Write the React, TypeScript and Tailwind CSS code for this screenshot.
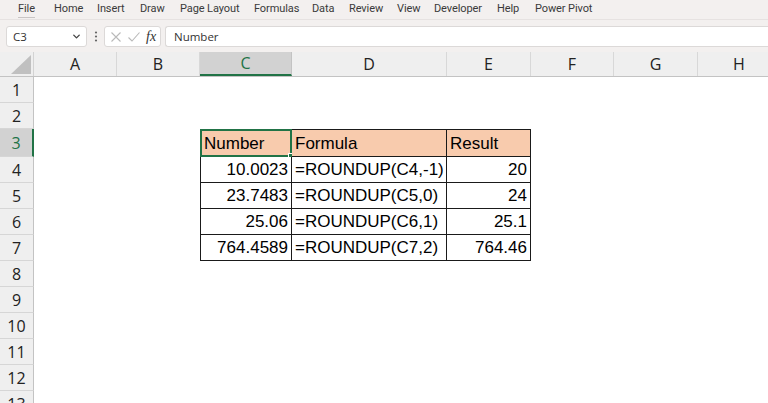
import { ChevronDown } from 'lucide-react'

const tabs = [
  { label: 'File', w: 'w-[36px]' },
  { label: 'Home', w: 'w-[43px]' },
  { label: 'Insert', w: 'w-[43px]' },
  { label: 'Draw', w: 'w-[40px]' },
  { label: 'Page Layout', w: 'w-[74px]' },
  { label: 'Formulas', w: 'w-[58px]' },
  { label: 'Data', w: 'w-[37px]' },
  { label: 'Review', w: 'w-[48px]' },
  { label: 'View', w: 'w-[37px]' },
  { label: 'Developer', w: 'w-[63px]' },
  { label: 'Help', w: 'w-[38px]' },
  { label: 'Power Pivot', w: 'w-[80px]' },
]

const cols = [
  { id: 'A', w: 'w-[83px]' },
  { id: 'B', w: 'w-[83px]' },
  { id: 'C', w: 'w-[92px]' },
  { id: 'D', w: 'w-[155px]' },
  { id: 'E', w: 'w-[84px]' },
  { id: 'F', w: 'w-[83px]' },
  { id: 'G', w: 'w-[84px]' },
  { id: 'H', w: 'w-[83px]' },
]

const rows = Array.from({ length: 13 }, (_, i) => i + 1)

const data: Record<number, [string, string, string]> = {
  3: ['Number', 'Formula', 'Result'],
  4: ['10.0023', '=ROUNDUP(C4,-1)', '20'],
  5: ['23.7483', '=ROUNDUP(C5,0)', '24'],
  6: ['25.06', '=ROUNDUP(C6,1)', '25.1'],
  7: ['764.4589', '=ROUNDUP(C7,2)', '764.46'],
}

const uiFont = { fontFamily: '"Open Sans", "Noto Sans", sans-serif' }
const tabFont = { fontFamily: 'Roboto, "Open Sans", sans-serif' }
const cellFont = { fontFamily: '"Liberation Sans", Arial, sans-serif' }

function TableCell({ row, col }: { row: number; col: string }) {
  const values = data[row]
  const idx = col === 'C' ? 0 : col === 'D' ? 1 : 2
  const header = row === 3
  const alignRight = !header && idx !== 1
  return (
    <div
      className={`relative flex h-full w-full items-end border-r border-b border-[#1a1a1a] pb-[2px] text-[17px] leading-[20px] text-black ${
        col === 'C' ? 'border-l' : ''
      } ${header ? 'border-t bg-[#f8cbad]' : 'bg-white'} ${
        alignRight ? 'justify-end pr-[3px]' : 'pl-[3px]'
      }`}
      style={cellFont}
    >
      {values[idx]}
      {header && col === 'C' && (
        <div className="pointer-events-none absolute -top-px -bottom-px -left-px -right-px border-2 border-[#217346]">
          <div className="absolute -right-[4px] -bottom-[4px] h-[6px] w-[6px] border border-white bg-[#217346]" />
        </div>
      )}
    </div>
  )
}

export default function App() {
  return (
    <div className="h-[403px] w-[768px] overflow-hidden bg-white" style={uiFont}>
      {/* ribbon tabs + formula bar */}
      <div className="bg-[#f3f0ef]">
        <div
          className="flex h-[19px] items-start pl-[18px] pt-[1px] text-[11px] leading-[15px] tracking-[-0.1px] text-[#3a3a3a]"
          style={tabFont}
        >
          {tabs.map((t) => (
            <div key={t.label} className={`${t.w} shrink-0`}>
              <span className={t.label === 'File' ? 'inline-block border-b border-[#c9c5c4] pb-[1px]' : ''}>
                {t.label}
              </span>
            </div>
          ))}
        </div>
        <div className="flex h-[33px] items-start border-t border-[#e6e2e1] pt-[6px]">
          <div className="ml-[6px] flex h-[21px] w-[81px] items-center justify-between rounded-[3px] border border-[#dcd9d8] bg-white pl-[6px] pr-[4px] text-[11.5px] text-[#333]">
            <span>C3</span>
            <ChevronDown size={11} strokeWidth={3} className="text-[#444]" />
          </div>
          <svg width="16" height="21" viewBox="0 0 16 21" className="ml-[1px]">
            <circle cx="8" cy="6.5" r="1.1" fill="#666" />
            <circle cx="8" cy="10.5" r="1.1" fill="#666" />
            <circle cx="8" cy="14.5" r="1.1" fill="#666" />
          </svg>
          <div className="flex h-[21px] w-[57px] items-center rounded-[3px] border border-[#dcd9d8] bg-white pl-[5px]">
            <svg width="12" height="12" viewBox="0 0 12 12">
              <path d="M1.5 1.5 L10.5 10.5 M10.5 1.5 L1.5 10.5" stroke="#b9b9b9" strokeWidth="1.1" fill="none" />
            </svg>
            <svg width="14" height="12" viewBox="0 0 14 12" className="ml-[5px]">
              <path d="M1.5 6.5 L5 10 L12.5 1.5" stroke="#b9b9b9" strokeWidth="1.1" fill="none" />
            </svg>
            <span
              className="ml-[5px] text-[14px] italic leading-none text-[#333]"
              style={{ fontFamily: '"Liberation Serif", "Times New Roman", serif' }}
            >
              fx
            </span>
          </div>
          <div className="ml-[4px] flex h-[21px] flex-1 items-center rounded-l-[3px] border border-r-0 border-[#dcd9d8] bg-white pl-[8px] text-[11.5px] text-[#333]">
            Number
          </div>
        </div>
      </div>

      {/* column headers */}
      <div className="flex h-[25px] border-b border-[#c3c3c3] bg-[#efefef]">
        <div className="flex w-[34px] shrink-0 items-end justify-end border-r border-[#d3d3d3] pr-[2px] pb-[2px]">
          <svg width="20" height="19" viewBox="0 0 20 19">
            <polygon points="20,0 20,19 0,19" fill="#c0c0c0" />
          </svg>
        </div>
        {cols.map((c) => (
          <div
            key={c.id}
            className={`${c.w} flex shrink-0 items-center justify-center border-r text-[16px] ${
              c.id === 'C'
                ? 'border-[#c3c3c3] border-b-2 border-b-[#217346] bg-[#d2d2d2] text-[#217346]'
                : 'border-[#d8d8d8] text-[#222]'
            }`}
          >
            {c.id}
          </div>
        ))}
      </div>

      {/* grid rows */}
      {rows.map((r) => (
        <div key={r} className={`flex ${r === 3 ? 'h-[28px]' : 'h-[26px]'}`}>
          <div
            className={`flex w-[34px] shrink-0 items-center justify-center border-b border-[#d6d6d6] text-[16px] ${
              r === 3
                ? 'border-r-2 border-r-[#217346] bg-[#d2d2d2] text-[#217346]'
                : 'border-r border-r-[#c3c3c3] bg-[#efefef] text-[#222]'
            }`}
          >
            {r}
          </div>
          {cols.map((c) => (
            <div key={c.id} className={`${c.w} h-full shrink-0`}>
              {data[r] && (c.id === 'C' || c.id === 'D' || c.id === 'E') ? <TableCell row={r} col={c.id} /> : null}
            </div>
          ))}
        </div>
      ))}
    </div>
  )
}
